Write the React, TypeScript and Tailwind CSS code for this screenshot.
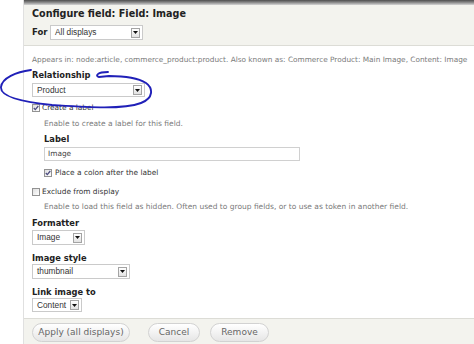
import React from "react";

function Arrow() {
  return (
    <span className="flex h-[10px] w-[9px] items-center justify-center border border-[#a4a4a4] bg-gradient-to-b from-white to-[#e2e2e2]">
      <svg width="5" height="3" viewBox="0 0 5 3">
        <polygon points="0,0 5,0 2.5,3" fill="#111" />
      </svg>
    </span>
  );
}

function Select({ className, children }: { className: string; children: React.ReactNode }) {
  return (
    <div
      className={
        "flex items-center justify-between border border-[#cacaca] bg-white pl-[4px] pr-[2px] font-['Liberation_Sans',Arial,sans-serif] text-[8.3px] text-[#333] " +
        className
      }
    >
      <span>{children}</span>
      <Arrow />
    </div>
  );
}

function Check({ checked }: { checked?: boolean }) {
  return (
    <span className="flex h-[8px] w-[8px] shrink-0 items-center justify-center border border-[#929292] bg-gradient-to-br from-[#dedede] to-white">
      {checked && (
        <svg width="6" height="6" viewBox="0 0 6 6">
          <path d="M0.8 3 L2.3 4.6 L5.3 1" stroke="#4d4d80" strokeWidth="1.3" fill="none" />
        </svg>
      )}
    </span>
  );
}

function Pill({ className, children }: { className: string; children: React.ReactNode }) {
  return (
    <div
      className={
        "flex h-[19px] items-center justify-center rounded-full border border-[#d2d2d2] bg-gradient-to-b from-white to-[#e6e6e6] text-[9px] text-[#666] " +
        className
      }
    >
      {children}
    </div>
  );
}

export default function App() {
  return (
    <div className="relative flex h-[344px] w-[474px] overflow-hidden bg-white font-['DejaVu_Sans',Verdana,sans-serif]">
      <div className="w-[23px] shrink-0" />
      <div className="flex flex-1 flex-col border-l border-[#e0e0e0]">
        <div className="h-[5px] bg-gradient-to-b from-[#4e4e4e] via-[#8c8c8c] to-[#d6d6d6]" />
        <div className="border-b border-[#dcdcd6] bg-[#f3f3ee] pb-[5px] pl-[8px]">
          <div className="pt-[4px] text-[9.6px] font-bold leading-[10px] text-[#222]">
            Configure field: Field: Image
          </div>
          <div className="mt-[6px] flex h-[15px] items-center">
            <span className="w-[18px] text-[8.5px] font-bold text-[#222]">For</span>
            <Select className="h-[15px] w-[93px]">All displays</Select>
          </div>
        </div>

        <div className="flex-1 pl-[8px] pt-[6px]">
          <div className="flex h-[16px] items-center whitespace-nowrap text-[7.35px] text-[#7a7a7a]">
            Appears in: node:article, commerce_product:product. Also known as: Commerce Product: Main Image, Content: Image
          </div>
          <div className="flex h-[15px] items-center text-[8.3px] font-bold text-[#222]">Relationship</div>
          <Select className="h-[14px] w-[113px]">Product</Select>

          <div className="mt-[4px] flex h-[14px] items-center gap-[2px] text-[7.4px] text-[#333]">
            <Check checked />
            <span>Create a label</span>
          </div>
          <div className="ml-[12px]">
            <div className="mt-[2px] flex h-[14px] items-center text-[7.5px] text-[#7a7a7a]">
              Enable to create a label for this field.
            </div>
            <div className="mt-[2px] flex h-[13px] items-center text-[8.3px] font-bold text-[#222]">Label</div>
            <div className="mt-[1px] flex h-[14px] w-[256px] items-center border border-[#d0d0d0] bg-white pl-[3px] text-[7.4px] text-[#444]">
              Image
            </div>
            <div className="mt-[5px] flex h-[14px] items-center gap-[3px] text-[7.4px] text-[#333]">
              <Check checked />
              <span>Place a colon after the label</span>
            </div>
          </div>

          <div className="mt-[5px] flex h-[14px] items-center gap-[2px] text-[7.4px] text-[#333]">
            <Check />
            <span>Exclude from display</span>
          </div>
          <div className="ml-[12px] mt-[1px] flex h-[14px] items-center whitespace-nowrap text-[7.5px] text-[#7a7a7a]">
            Enable to load this field as hidden. Often used to group fields, or to use as token in another field.
          </div>

          <div className="mt-[2px] flex h-[14px] items-center text-[8.3px] font-bold text-[#222]">Formatter</div>
          <Select className="h-[15px] w-[53px]">Image</Select>

          <div className="mt-[7px] flex h-[12px] items-center text-[8.3px] font-bold text-[#222]">Image style</div>
          <Select className="h-[15px] w-[98px]">thumbnail</Select>

          <div className="mt-[7px] flex h-[12px] items-center text-[8.3px] font-bold text-[#222]">Link image to</div>
          <Select className="h-[14px] w-[50px]">Content</Select>
        </div>

        <div className="flex h-[26px] border-t border-[#dcdcd6] bg-[#f3f3ee] pl-[8px] pt-[4px]">
          <Pill className="w-[98px]">Apply (all displays)</Pill>
          <Pill className="ml-[18px] w-[52px]">Cancel</Pill>
          <Pill className="ml-[10px] w-[59px]">Remove</Pill>
        </div>
      </div>

      <svg className="pointer-events-none absolute left-0 top-0" width="474" height="344" viewBox="0 0 474 344">
        <path
          d="M31 70 C16 72 2 78 1 87 C0 97 22 102 52 105 C84 107 122 110 141 103 C154 98 153 88 146 83 C138 78 122 76 109 76 L99 77 C95 76 97 72 108 72"
          stroke="#2020b8"
          strokeWidth="1.9"
          fill="none"
          strokeLinecap="round"
        />
      </svg>
    </div>
  );
}
